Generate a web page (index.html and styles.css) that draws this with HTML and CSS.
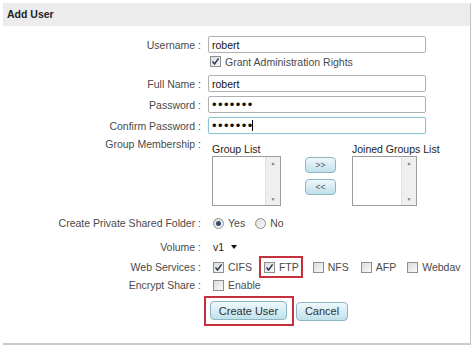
FILE: index.html
```html
<!DOCTYPE html>
<html>
<head>
<meta charset="utf-8">
<link rel="stylesheet" href="styles.css">
</head>
<body>
<div class="panel">
  <div class="hdr">Add User</div>
  <div class="form">
    <div class="row r-field r-first"><span class="lbl">Username :</span><input class="txt" type="text" value="robert"></div>
    <div class="row r-grant"><span class="lbl"></span><span class="cb on grant-cb"><svg viewBox="0 0 9 9" width="9" height="9"><path d="M1.5 4.6 L3.6 7 L7.6 1.4" fill="none" stroke="#2c3a58" stroke-width="1.5"/></svg></span><span class="opt">Grant Administration Rights</span></div>
    <div class="row r-field r-gap"><span class="lbl">Full Name :</span><input class="txt" type="text" value="robert"></div>
    <div class="row r-field"><span class="lbl">Password :</span><input class="txt pw" type="password" value="abcdefg"></div>
    <div class="row r-field"><span class="lbl">Confirm Password :</span><span class="fld"><input class="txt pw focus" type="password" value="abcdefg"><span class="caret"></span></span></div>
    <div class="row r-group"><span class="lbl lbl-top">Group Membership :</span>
      <div class="lists">
        <div class="lcol lcol-group">
          <div class="ltitle">Group List</div>
          <div class="lbox w-group"><div class="sb"><span class="ar">&#9650;</span><span class="ar">&#9660;</span></div></div>
        </div>
        <div class="mv">
          <button class="btn sm" type="button">&gt;&gt;</button>
          <button class="btn sm" type="button">&lt;&lt;</button>
        </div>
        <div class="lcol lcol-joined">
          <div class="ltitle">Joined Groups List</div>
          <div class="lbox w-joined"><div class="sb"><span class="ar">&#9650;</span><span class="ar">&#9660;</span></div></div>
        </div>
      </div>
    </div>
    <div class="row r-create"><span class="lbl">Create Private Shared Folder :</span>
      <span class="rd on first-opt"></span><span class="opt">Yes</span>
      <span class="rd no-rd"></span><span class="opt">No</span>
    </div>
    <div class="row r-vol"><span class="lbl">Volume :</span><span class="sel">v1<span class="tri"></span></span></div>
    <div class="row r-web"><span class="lbl">Web Services :</span>
      <span class="cb on first-opt"><svg viewBox="0 0 9 9" width="9" height="9"><path d="M1.5 4.6 L3.6 7 L7.6 1.4" fill="none" stroke="#2c3a58" stroke-width="1.5"/></svg></span><span class="opt">CIFS</span>
      <span class="hl ftp"><span class="cb on"><svg viewBox="0 0 9 9" width="9" height="9"><path d="M1.5 4.6 L3.6 7 L7.6 1.4" fill="none" stroke="#2c3a58" stroke-width="1.5"/></svg></span><span class="opt">FTP</span></span>
      <span class="cb nfs"></span><span class="opt">NFS</span>
      <span class="cb afp"></span><span class="opt">AFP</span>
      <span class="cb webdav"></span><span class="opt">Webdav</span>
    </div>
    <div class="row r-enc"><span class="lbl">Encrypt Share :</span><span class="cb first-opt"></span><span class="opt">Enable</span></div>
    <div class="row r-btns"><span class="spacer"></span>
      <span class="hl hl-btn"><button class="btn big create" type="button">Create User</button></span>
      <button class="btn big cancel" type="button">Cancel</button>
    </div>
  </div>
</div>
</body>
</html>
```
FILE: styles.css
```css
body {
  margin: 0;
  padding: 3px 0 0 3px;
  font: 10.5px "Liberation Sans", Arial, sans-serif;
  color: #4a4a4a;
  background: #fff;
}
.panel {
  width: 467px;
  height: 340px;
  border-right: 1px solid #c4c4c4;
  border-bottom: 2px solid #cbcbcb;
}
.hdr {
  height: 23px;
  line-height: 23px;
  background: #ececec;
  font-weight: bold;
  font-size: 10.5px;
  color: #222;
  padding-left: 4px;
}
.form { padding-top: 8px; }
.row {
  display: flex;
  align-items: center;
  height: 21px;
}
.lbl {
  width: 198px;
  padding-right: 7px;
  flex: none;
  text-align: right;
  white-space: nowrap;
}
.txt {
  width: 218px;
  height: 17px;
  box-sizing: border-box;
  border: 1px solid #b0b0b0;
  border-radius: 2px;
  padding: 0 3px;
  margin: 0;
  font: 10.5px "Liberation Sans", Arial, sans-serif;
  color: #111;
  background: #fff;
  outline: none;
}
.pw { letter-spacing: 1.4px; font-size: 13px; }
.focus {
  border-color: #8ec4d4;
  box-shadow: 0 0 2px #c8e7ef;
}
.fld { position: relative; display: flex; }
.caret {
  position: absolute;
  left: 44px;
  top: 3px;
  width: 1px;
  height: 11px;
  background: #000;
}
.r-grant { height: 13px; }
.r-gap { margin-top: 5px; }
.cb {
  width: 11px;
  height: 11px;
  box-sizing: border-box;
  border: 1px solid #8e8e8e;
  background: linear-gradient(135deg, #dcdcdc, #fafafa);
  display: inline-flex;
  align-items: center;
  justify-content: center;
  flex: none;
}
.cb svg { display: block; }
.grant-cb { margin-left: 2px; }
.opt { margin-left: 4px; white-space: nowrap; }
.first-opt { margin-left: 5px; }

.r-group { height: 70px; align-items: flex-start; }
.lbl-top { line-height: 16px; }
.lists { display: flex; align-items: flex-start; }
.lcol { margin-top: 7px; }
.lcol-group { margin-left: 4px; }
.lcol-joined { margin-left: 16px; }
.ltitle { line-height: 13px; color: #222; white-space: nowrap; }
.lbox {
  height: 50px;
  box-sizing: border-box;
  border: 1px solid #9c9c9c;
  background: #fff;
  display: flex;
  justify-content: flex-end;
}
.w-group { width: 69px; }
.w-joined { width: 65px; }
.sb {
  width: 14px;
  background: #efefef;
  border-left: 1px solid #e2e2e2;
  display: flex;
  flex-direction: column;
  justify-content: space-between;
  align-items: center;
  padding: 3px 0;
}
.ar { font-size: 5px; line-height: 6px; color: #7a7a7a; }
.mv {
  margin-left: 24px;
  margin-top: 21px;
  display: flex;
  flex-direction: column;
  gap: 6px;
}
.btn {
  margin: 0;
  padding: 0;
  border: 1px solid #8db6c4;
  border-radius: 4px;
  background: linear-gradient(#eef8fb, #c0e1eb);
  color: #333;
  font: 11px "Liberation Sans", Arial, sans-serif;
}
.sm { width: 31px; height: 16px; font-size: 8.5px; color: #556; line-height: 14px; }

.r-create { margin-top: 6px; height: 22px; }
.rd {
  width: 11px;
  height: 11px;
  box-sizing: border-box;
  border-radius: 50%;
  border: 1px solid #8e8e8e;
  background: linear-gradient(135deg, #dcdcdc, #fafafa);
  display: inline-flex;
  align-items: center;
  justify-content: center;
  flex: none;
}
.rd.on::after {
  content: "";
  width: 5px;
  height: 5px;
  border-radius: 50%;
  background: #2f4a72;
}
.no-rd { margin-left: 10px; }

.r-vol { margin-top: 3px; height: 20px; }
.sel { margin-left: 5px; color: #222; display: inline-flex; align-items: center; }
.tri {
  margin-left: 7px;
  width: 0;
  height: 0;
  border-left: 3px solid transparent;
  border-right: 3px solid transparent;
  border-top: 4px solid #111;
}

.r-web { height: 20px; }
.hl { border: 2px solid #c4303b; display: inline-flex; align-items: center; }
.ftp { margin-left: 7px; height: 22px; box-sizing: border-box; padding: 0 2px 0 3px; }
.nfs { margin-left: 10px; }
.afp { margin-left: 12px; }
.webdav { margin-left: 11px; }

.r-enc { height: 16px; }

.r-btns { margin-top: 3px; height: 30px; }
.spacer { width: 201px; flex: none; }
.hl-btn { padding: 3px 5px 4px 4px; }
.big { height: 19px; }
.create { width: 77px; }
.cancel { width: 52px; margin-left: 2px; }
```
